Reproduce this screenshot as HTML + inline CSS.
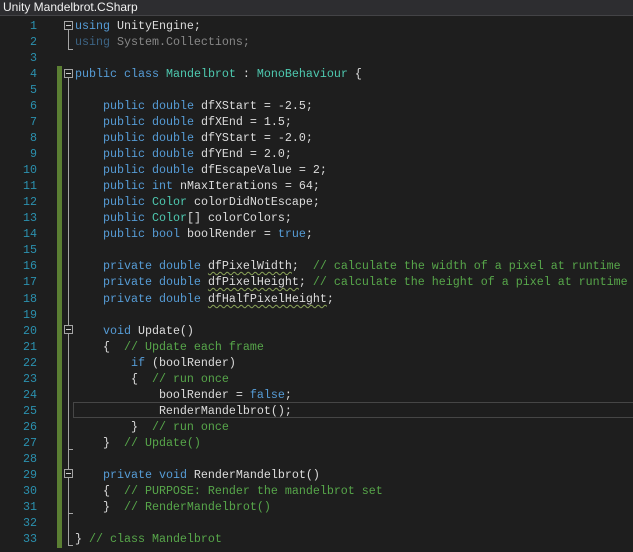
<!DOCTYPE html>
<html><head><meta charset="utf-8"><style>
html,body{margin:0;padding:0;width:633px;height:552px;overflow:hidden;background:#1e1e1e}
#title{position:absolute;left:0;top:0;width:633px;height:16px;background:#2d2d30;border-bottom:1px solid #434346;color:#f1f1f1;font:12px "Liberation Sans",sans-serif;line-height:15px;padding-left:3px;box-sizing:border-box}
.ln{position:absolute;left:0;width:37px;text-align:right;color:#2b91af;font:11.67px "Liberation Mono",monospace;height:16px;line-height:16px}
.cd{position:absolute;left:75px;white-space:pre;color:#dcdcdc;font:11.67px "Liberation Mono",monospace;height:16px;line-height:16px}
.k{color:#569cd6}.t{color:#4ec9b0}.c{color:#57a64a}.n{color:#b5cea8}.d{opacity:.55}
.sq{text-decoration:underline wavy #8ca55a;text-decoration-thickness:1px;text-underline-offset:2px}
#bar{position:absolute;left:57px;top:66px;width:5px;height:482px;background:#5b7f33}
.v{position:absolute;left:68px;width:1px;background:#a5a5a5}
.h{position:absolute;left:68px;width:5px;height:1px;background:#a5a5a5}
.fb{position:absolute;left:64px;width:7px;height:7px;border:1px solid #a5a5a5;background:#1e1e1e}
.fb:after{content:"";position:absolute;left:1px;top:3px;width:5px;height:1px;background:#d0d0d0}
#cur{position:absolute;left:73px;top:402px;width:560px;height:14px;border:1px solid #464646;border-right:none}
</style></head><body>
<div id="title">Unity Mandelbrot.CSharp</div>
<div id="bar"></div>
<div id="cur"></div>
<div class="fb" style="top:21px"></div><div class="v" style="top:30px;height:19px"></div><div class="h" style="top:49px"></div>
<div class="fb" style="top:69px"></div><div class="v" style="top:78px;height:467px"></div><div class="h" style="top:545px"></div>
<div class="fb" style="top:325px"></div>
<div class="fb" style="top:469px"></div>
<div class="h" style="top:449px"></div>
<div class="h" style="top:513px"></div>
<div id="lines"></div>
<script>
var L=[
'<span class="k">using</span> UnityEngine;',
'<span class="d"><span class="k">using</span> System.Collections;</span>',
'',
'<span class="k">public</span> <span class="k">class</span> <span class="t">Mandelbrot</span> : <span class="t">MonoBehaviour</span> {',
'',
'    <span class="k">public</span> <span class="k">double</span> dfXStart = -2.5;',
'    <span class="k">public</span> <span class="k">double</span> dfXEnd = 1.5;',
'    <span class="k">public</span> <span class="k">double</span> dfYStart = -2.0;',
'    <span class="k">public</span> <span class="k">double</span> dfYEnd = 2.0;',
'    <span class="k">public</span> <span class="k">double</span> dfEscapeValue = 2;',
'    <span class="k">public</span> <span class="k">int</span> nMaxIterations = 64;',
'    <span class="k">public</span> <span class="t">Color</span> colorDidNotEscape;',
'    <span class="k">public</span> <span class="t">Color</span>[] colorColors;',
'    <span class="k">public</span> <span class="k">bool</span> boolRender = <span class="k">true</span>;',
'',
'    <span class="k">private</span> <span class="k">double</span> <span class="sq">dfPixelWidth</span>;  <span class="c">// calculate the width of a pixel at runtime</span>',
'    <span class="k">private</span> <span class="k">double</span> <span class="sq">dfPixelHeight</span>; <span class="c">// calculate the height of a pixel at runtime</span>',
'    <span class="k">private</span> <span class="k">double</span> <span class="sq">dfHalfPixelHeight</span>;',
'',
'    <span class="k">void</span> Update()',
'    {  <span class="c">// Update each frame</span>',
'        <span class="k">if</span> (boolRender)',
'        {  <span class="c">// run once</span>',
'            boolRender = <span class="k">false</span>;',
'            RenderMandelbrot();',
'        }  <span class="c">// run once</span>',
'    }  <span class="c">// Update()</span>',
'',
'    <span class="k">private</span> <span class="k">void</span> RenderMandelbrot()',
'    {  <span class="c">// PURPOSE: Render the mandelbrot set</span>',
'    }  <span class="c">// RenderMandelbrot()</span>',
'',
'} <span class="c">// class Mandelbrot</span>'];
var h='';
for(var i=0;i<L.length;i++){var t=Math.round(18+i*16.03);
h+='<div class="ln" style="top:'+t+'px">'+(i+1)+'</div><div class="cd" style="top:'+t+'px">'+L[i]+'</div>';}
document.getElementById('lines').innerHTML=h;
</script>
</body></html>
